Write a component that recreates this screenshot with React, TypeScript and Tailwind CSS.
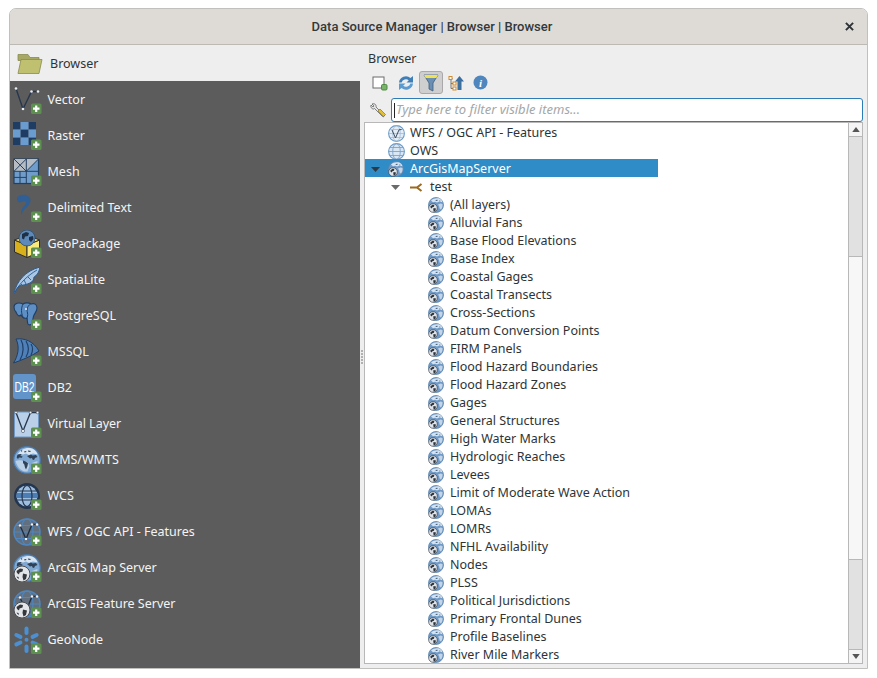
import React from "react";

const Plus = () => (
  <g>
    <rect x="18" y="17.500" width="10.500" height="10.500" rx="1.600" fill="#5c8f50" />
    <path d="M23.200 19.500v6.500M20 22.700h6.500" stroke="#fff" strokeWidth="2.200" />
  </g>
);

const GlobeBase = () => (
  <g>
    <circle cx="14" cy="14" r="13.300" fill="#7fa8d2" stroke="#4a78a8" strokeWidth="1.200" />
    <path d="M4 9c3-5 8-7.500 13-7 4 .7 6.500 3 7.500 6.500L20 7.500 16 9l-3-1.500-3 1-2.500-.5z" fill="#d7e4f1" />
    <path d="M2.500 15c3-1 6-1 8 .5l4 .5 2 4-2 5.500c-5 .5-10-3-12-10.500zM19 17l5.500-2c0 3-1 6-3.500 8.500z" fill="#b9d0e6" />
    <g fill="#2f4257">
      <path d="M4.500 8.500l3.500-.5.500 1-1.500 1 2.500.3-.5 1.500-3-.3-1 1.500-1.300-1.500zM11 5.500l2-.5.500 1-2 .5zM15 4.500l3 .5-1 1-2-.5z" />
      <path d="M14 10l4-1.500 1.500 1 3.500-.5 1.500 2-2.500 1-1 2-1.500-.5-.5-1.500-2 .5z" />
      <path d="M10 14.500l2.500 1 2.500 1.500-.5 3-1.500 3.500-1-2-.7-3-1.300-1.500zM20 19l1.500.5-.5 2-1.200-.5zM8 4l1.500 1-1.500.7z" />
    </g>
  </g>
);

const SmallServer = () => (
  <g>
    <circle cx="9" cy="20" r="8" fill="#e3e6e9" stroke="#4a4e52" strokeWidth="1" />
    <path d="M3.500 17l3.500-2.500 3 .5-.5 2.500-3 1-.5 2-2-1.500zM10 19.500l4 1-1 4.500-2.500 1.500-1-3.500zM3.500 22.500l2 .5.500 2-1.500-1z" fill="#34383c" />
  </g>
);

const GridGlobe = () => (
  <g fill="none">
    <circle cx="14" cy="14" r="13" fill="#6d9ccc" fillOpacity=".3" stroke="#4f86bf" strokeWidth="1.500" />
    <ellipse cx="14" cy="14" rx="6" ry="13" stroke="#4f86bf" strokeWidth="1.100" />
    <path d="M1 14h26M3 7.500h22M3 20.500h22" stroke="#4f86bf" strokeWidth="1.100" />
  </g>
);

const VShape = () => (
  <g>
    <path d="M7 7.500L13 21 19 6.500 24 6.500" fill="none" stroke="#1f2d40" strokeWidth="1.300" />
    <g fill="#f2f2f2">
      <circle cx="7" cy="7.500" r="1.200" />
      <circle cx="13" cy="21" r="1.200" />
      <circle cx="19" cy="6.500" r="1.200" />
      <circle cx="24" cy="6.500" r="1.200" />
    </g>
  </g>
);

const icons: Record<string, React.ReactNode> = {
  vector: (
    <>
      <path d="M3 2.500L10 23 18.500 5.500H25" fill="none" stroke="#26364d" strokeWidth="1.400" />
      <g fill="#e9edf1">
        <circle cx="3" cy="2.500" r="1.300" />
        <circle cx="10" cy="23" r="1.300" />
        <circle cx="18.500" cy="5.500" r="1.300" />
        <circle cx="25" cy="5.500" r="1.300" />
      </g>
    </>
  ),
  raster: (
    <>
      <path d="M0 0h7.500v7.500H0zM15.500 0H23v7.500h-7.500zM7.500 7.500h8v8h-8zM0 15.500h7.500V23H0zM15.500 15.500H23V23h-7.500z" fill="#1f3d63" />
      <path d="M7.500 0h8v7.500h-8zM0 7.500h7.500v8H0zM15.500 7.500H23v8h-7.500zM7.500 15.500h8V23h-8z" fill="#6b9ccf" />
    </>
  ),
  mesh: (
    <>
      <rect x="1" y="1" width="24.500" height="24.500" fill="#6f9ccb" stroke="#24405f" strokeWidth="1.200" />
      <path d="M1 1h12.300v12.300H1z" fill="#b5bcc4" />
      <path d="M13.300 1h12.200L13.300 13.300z" fill="#b5bcc4" />
      <path d="M13.300 1v24.500M1 13.300h24.500M1 1l12.300 12.300M13.300 1L1 13.300M25.500 1L13.300 13.300M1 19.400h12.300M7 13.300v12.200" stroke="#24405f" strokeWidth="1" fill="none" />
    </>
  ),
  delimited: (
    <path d="M8 1c5-1 9 1 9.500 5 .4 4-3.500 7-6 9.500-1.400 1.400-2.700 3.500-3 6-.8-3-.3-6 1.500-8.500C12 11 13.500 9.500 13 8 12.500 6.800 11 7 9 8 6 9 4 8 4 5c0-2 2-3.500 4-4z" fill="#2f5f94" />
  ),
  geopackage: (
    <>
      <path d="M1.500 10v12L14 27.500V15z" fill="#d8b01c" stroke="#2d2d2d" strokeWidth="1" />
      <path d="M26.500 10v12L14 27.500V15z" fill="#f7e97a" stroke="#2d2d2d" strokeWidth="1" />
      <path d="M1.500 10L14 5l12.500 5L14 15z" fill="#f3d86a" stroke="#2d2d2d" strokeWidth="1" />
      <circle cx="14" cy="8" r="8" fill="#5d8ab8" stroke="#2c4f75" strokeWidth=".8" />
      <path d="M9 4l4-2 3 1-1 3-3 .5-1 3-2-1zM16 7l4-1 .5 3-2.500 3-2-2z" fill="#1f3046" />
    </>
  ),
  spatialite: (
    <>
      <path d="M1 27C4 15 12 5 27 1c-1 6-4 9-6 10 0 3-2 5-4 6-4 2-8 2-11 3-2 2-3 4-4 7z" fill="#a9c6e6" stroke="#2c5a8c" strokeWidth="1" />
      <path d="M2 26C7 17 14 10 24 4M11 14l2 4M15 11l3 3M8 18l2 2" stroke="#2c5a8c" strokeWidth=".9" fill="none" />
    </>
  ),
  postgres: (
    <>
      <path d="M1 5c0-4 5-5 9-3 2-1.500 6-1.500 8 0 3-1 6 0 6 4 0 3-2 5-3 7-1 2-1 5-2 8-.5 2-3 2.500-4 1-1-2-.5-4-1-6-3 1-5-1-6-3-2 2-4 0-5-3C2 9 1 7 1 5z" fill="#5e8fc4" stroke="#1f3f66" strokeWidth="1.100" />
      <path d="M10 2c-2 4-2 9 0 13M17.500 2c-3 2-4 5-3 9 .5 2 0 4-1 6" stroke="#1f3f66" strokeWidth="1" fill="none" />
      <circle cx="13" cy="7" r="1" fill="#e9eef4" />
    </>
  ),
  mssql: (
    <>
      <path d="M3 1c9-1 17 2 23 12C19 18 9 22 .5 25 5 18 7 9 3 1z" fill="#4f81b8" stroke="#1f3f66" strokeWidth="1" />
      <path d="M8 2c3 5 3 13-1 20M13 3c3 5 3 11 0 16M18 6c2 3 2 7 0 11" stroke="#1f3f66" strokeWidth="1.200" fill="none" />
    </>
  ),
  db2: (
    <>
      <rect x="0" y="0" width="23" height="25" rx="3" fill="#6394c9" />
      <text x="1.500" y="18" fontSize="14" fill="#fff" fontFamily="'Liberation Sans', sans-serif" textLength="20" lengthAdjust="spacingAndGlyphs">DB2</text>
    </>
  ),
  virtual: (
    <>
      <rect x="1.500" y="2" width="24" height="25" fill="#b9d0e8" stroke="#6f97c2" strokeWidth="1" />
      <path d="M3 2.500L10 21l7.500-18.500L24.500 2.500" fill="none" stroke="#26364d" strokeWidth="1.300" />
      <g fill="#f2f2f2" stroke="#26364d" strokeWidth=".5">
        <circle cx="3" cy="2.500" r="1.300" />
        <circle cx="10" cy="21" r="1.600" />
        <circle cx="17.500" cy="2.500" r="1.300" />
        <circle cx="24.500" cy="2.500" r="1.300" />
      </g>
    </>
  ),
  wms: <GlobeBase />,
  wcs: (
    <>
      <circle cx="14" cy="14" r="13" fill="#24364f" />
      <circle cx="14" cy="14" r="10.500" fill="#9fbfe0" />
      <path d="M3.500 11h21v5h-21z" fill="#4c7db3" />
      <ellipse cx="14" cy="14" rx="5" ry="10.500" fill="none" stroke="#24364f" strokeWidth="1.200" />
      <path d="M3.500 9h21M3.500 18h21" stroke="#24364f" strokeWidth="1" />
    </>
  ),
  wfs: (
    <>
      <GridGlobe />
      <VShape />
    </>
  ),
  arcmap: (
    <>
      <GlobeBase />
      <SmallServer />
    </>
  ),
  arcfeat: (
    <>
      <GridGlobe />
      <VShape />
      <SmallServer />
    </>
  ),
  geonode: (
    <g fill="#4d8fd0">
      <rect x="11.500" y="0.500" width="4" height="8.500" rx="2" />
      <rect x="11.500" y="18.500" width="4" height="8.500" rx="2" />
      <rect x="11.500" y="0.500" width="4" height="8.500" rx="2" transform="rotate(65 13.500 13.700)" />
      <rect x="11.500" y="0.500" width="4" height="8.500" rx="2" transform="rotate(-65 13.500 13.700)" />
      <rect x="11.500" y="0.500" width="4" height="8.500" rx="2" transform="rotate(115 13.500 13.700)" />
      <rect x="11.500" y="0.500" width="4" height="8.500" rx="2" transform="rotate(-115 13.500 13.700)" />
      <circle cx="13.500" cy="13.700" r="2" />
    </g>
  ),
};

const providers: [string, string][] = [
  ["vector", "Vector"],
  ["raster", "Raster"],
  ["mesh", "Mesh"],
  ["delimited", "Delimited Text"],
  ["geopackage", "GeoPackage"],
  ["spatialite", "SpatiaLite"],
  ["postgres", "PostgreSQL"],
  ["mssql", "MSSQL"],
  ["db2", "DB2"],
  ["virtual", "Virtual Layer"],
  ["wms", "WMS/WMTS"],
  ["wcs", "WCS"],
  ["wfs", "WFS / OGC API - Features"],
  ["arcmap", "ArcGIS Map Server"],
  ["arcfeat", "ArcGIS Feature Server"],
  ["geonode", "GeoNode"],
];

const layers = [
  "(All layers)",
  "Alluvial Fans",
  "Base Flood Elevations",
  "Base Index",
  "Coastal Gages",
  "Coastal Transects",
  "Cross-Sections",
  "Datum Conversion Points",
  "FIRM Panels",
  "Flood Hazard Boundaries",
  "Flood Hazard Zones",
  "Gages",
  "General Structures",
  "High Water Marks",
  "Hydrologic Reaches",
  "Levees",
  "Limit of Moderate Wave Action",
  "LOMAs",
  "LOMRs",
  "NFHL Availability",
  "Nodes",
  "PLSS",
  "Political Jurisdictions",
  "Primary Frontal Dunes",
  "Profile Baselines",
  "River Mile Markers",
];

const ArcGlobe = ({ className }: { className: string }) => (
  <svg viewBox="0 0 16 16" className={className}>
    <circle cx="8" cy="8" r="7.500" fill="#6f99c6" stroke="#5a85b0" strokeWidth=".8" />
    <path d="M3 3.500C5 1.500 8 .8 10.500 1.300c2 .6 3.500 2 4 4l-3-.8-2.500 1-2-.8-2 .5z" fill="#d5e2ef" />
    <path d="M10 7.500l2.500-1 2 .5c.3 2-.2 4-1.500 5.500l-1.500-1-.3-2z" fill="#c3d5e7" />
    <path d="M7.500 3l2-.3.3.8-1.800.4zM11 3.500l1.500.3-.5.8z" fill="#3d5570" />
    <circle cx="5" cy="11" r="4.300" fill="#dfe5ea" stroke="#3c444d" strokeWidth=".7" />
    <path d="M2.300 9.500l2.200-1.700 1.800.3-.3 1.600-1.700.5-.3 1.200-1.400-.7zM5.500 11l2.500.5-.7 2.500-1.500.8-.5-2z" fill="#2f353c" />
  </svg>
);

const WfsGlobe = () => (
  <svg viewBox="0 0 17 17" className="w-[17px] h-[17px]">
    <circle cx="8.500" cy="8.500" r="7.900" fill="#e4edf6" stroke="#6d9ac6" strokeWidth="1.100" />
    <ellipse cx="8.500" cy="8.500" rx="3.800" ry="7.900" fill="none" stroke="#9dbcdb" strokeWidth=".8" />
    <path d="M.7 8.500h15.600M2 4.500h13M2 12.500h13" stroke="#9dbcdb" strokeWidth=".8" />
    <path d="M4 5l3.500 8L11 4.800l2.500-.3" fill="none" stroke="#3b4c63" strokeWidth="1" />
  </svg>
);

const OwsGlobe = () => (
  <svg viewBox="0 0 17 17" className="w-[17px] h-[17px]">
    <circle cx="8.500" cy="8.500" r="7.900" fill="#d9e6f3" stroke="#6d9ac6" strokeWidth="1.100" />
    <ellipse cx="8.500" cy="8.500" rx="3.800" ry="7.900" fill="none" stroke="#7ba4cc" strokeWidth=".9" />
    <path d="M.7 8.500h15.600M2 4.500h13M2 12.500h13" stroke="#7ba4cc" strokeWidth=".9" />
  </svg>
);

const Arrow = ({ color }: { color: string }) => (
  <svg viewBox="0 0 9 5" className="w-[9px] h-[5px]">
    <path d="M0 0h9L4.500 5z" fill={color} />
  </svg>
);

const ScrollArrow = ({ down }: { down?: boolean }) => (
  <svg viewBox="0 0 9 6" className="w-[8px] h-[5px]">
    <path d={down ? "M0 0h9L4.500 6z" : "M0 6h9L4.500 0z"} fill="#555" />
  </svg>
);

export default function App() {
  return (
    <div className="w-[877px] h-[678px] overflow-hidden bg-white pt-2 pl-[9px] text-[12.5px] text-[#2e3436] font-['Noto_Sans',sans-serif]">
      <div className="w-[859px] h-[661px] flex flex-col rounded-t-[7px] border border-[#c2c0bc] bg-[#eeeeee] overflow-hidden">
        <div className="relative h-9 shrink-0 flex items-center justify-center pr-[13px] bg-[#dedbd7] border-b border-[#bdb9b3] font-medium text-[13px] font-['Roboto',sans-serif] text-[#33383a]">
          Data Source Manager | Browser | Browser
          <svg viewBox="0 0 10 10" className="absolute right-[13px] top-[13px] w-[9px] h-[9px]">
            <path d="M1 1l8 8M9 1l-8 8" stroke="#2e3436" strokeWidth="2.200" />
          </svg>
        </div>
        <div className="flex-1 flex min-h-0">
          <div className="w-[350px] shrink-0 flex flex-col">
            <div className="h-9 shrink-0 flex items-center pl-[7px] pt-[2px] gap-[7px] bg-[#eeeeee] text-[#2e3436]">
              <svg viewBox="0 0 26 22" className="w-[26px] h-[22px] mb-[2px]">
                <path d="M1 2.500h10l2 3h9v3H1z" fill="#a6a864" stroke="#8a8c50" strokeWidth=".8" />
                <path d="M4 7.500h21l-3 14H1z" fill="#bfc070" stroke="#8a8c50" strokeWidth=".8" />
              </svg>
              Browser
            </div>
            <div className="flex-1 flex flex-col bg-[#5c5c5c] text-[#f4f4f4]">
              {providers.map(([k, label]) => (
                <div key={k} className="h-9 shrink-0 flex items-center pl-[3px] pt-[2px] gap-[6px]">
                  <svg viewBox="0 0 28.500 28" className="w-[28.500px] h-[28px] shrink-0">
                    {icons[k]}
                    <Plus />
                  </svg>
                  {label}
                </div>
              ))}
            </div>
          </div>
          <div className="relative flex-1 flex flex-col min-w-0 pl-1 pr-[3px]">
            <div className="absolute left-[1px] top-[305px] flex flex-col gap-px">
              {[0, 1, 2, 3, 4].map((i) => (
                <div key={i} className="w-[2px] h-[2px] bg-[#b0b0b0]" />
              ))}
            </div>
            <div className="h-[26px] shrink-0 flex items-center pl-1 pt-[2px]">Browser</div>
            <div className="h-[23px] shrink-0 flex items-center pl-2">
              <svg viewBox="0 0 16 16" className="w-4 h-4 mr-[10px]">
                <rect x="1" y="2" width="11" height="11" fill="#fff" stroke="#6b6b6b" strokeWidth="1" />
                <rect x="9.500" y="9.500" width="5.500" height="5.500" rx="1.200" fill="#7ab36a" stroke="#4e8a44" />
              </svg>
              <svg viewBox="0 0 16 16" className="w-[16px] h-[16px] mr-[5px]">
                <path d="M1 7.500A7 7 0 0 1 12.500 3L15 1v6.500H8.500l2.300-2.200A4.500 4.500 0 0 0 3.600 7.500z" fill="#3f7fb8" />
                <path d="M15 8.500A7 7 0 0 1 3.500 13L1 15V8.500h6.500l-2.300 2.200a4.500 4.500 0 0 0 7.200-2.200z" fill="#5b9bd0" />
              </svg>
              <div className="w-6 h-[23px] flex items-center justify-center rounded-[3px] border border-[#a9a9a9] bg-[#cfcfcf] mr-[5px]">
                <svg viewBox="0 0 16 18" className="w-4 h-[18px]">
                  <path d="M1 1h14L10 9v8l-4-2V9z" fill="#6a8fb3" stroke="#3f5d7a" strokeWidth=".8" />
                  <path d="M1 1h14l-1.600 3H2.600z" fill="#f0e34f" />
                </svg>
              </div>
              <svg viewBox="0 0 16 16" className="w-4 h-4 mr-[9px]">
                <path d="M1.500 3.500h3M3 3.500v10M3 8.500h3M3 13.500h3" stroke="#777" fill="none" />
                <rect x="1" y="1.500" width="3" height="3" fill="#fff" stroke="#d08a2a" />
                <rect x="5" y="7" width="3" height="3" fill="#fff" stroke="#d08a2a" />
                <rect x="5" y="12" width="3" height="3" fill="#fff" stroke="#d08a2a" />
                <path d="M11.500 1L16 6.500h-2.500V15h-4V6.500H7z" fill="#3d6f9f" />
              </svg>
              <svg viewBox="0 0 15 15" className="w-[15px] h-[15px]">
                <circle cx="7.500" cy="7.500" r="7" fill="#4f86bd" />
                <text x="7.500" y="11.500" textAnchor="middle" fontSize="11" fontWeight="700" fontStyle="italic" fill="#fff" fontFamily="'Liberation Serif', serif">i</text>
              </svg>
            </div>
            <div className="h-7 shrink-0 flex items-end">
              <svg viewBox="0 0 20 18" className="w-5 h-[18px] ml-1 mb-[3px] shrink-0">
                <path d="M4 3l2 2-1 1-2-2c-.8 2 .6 4 2.500 4l1-.5 8 8c1 .8 2.500-.5 1.500-1.500l-8-8c.5-2-1-4-4-3z" fill="#e4e4e4" stroke="#555" strokeWidth=".7" />
                <path d="M10 10l5.500 5.500 2-2L12 8z" fill="#e0bf3a" stroke="#7a6518" strokeWidth=".6" />
              </svg>
              <div className="ml-[3px] mr-px flex-1 h-6 bg-white rounded-[3px] border border-[#2c7cb5] flex items-center pl-[2px] italic text-[13px] text-[#a3a7a8] overflow-hidden whitespace-nowrap">
                <div className="w-px h-[15px] bg-[#222] mr-[1px]" />
                Type here to filter visible items...
              </div>
            </div>
            <div className="h-[542px] shrink-0 mr-px flex border border-[#b8b8b8] bg-white overflow-hidden">
              <div className="flex-1 min-w-0 flex flex-col overflow-hidden">
                <div className="h-[18px] shrink-0 flex items-center pl-[23px] pt-[2px] gap-[5px]">
                  <WfsGlobe />
                  WFS / OGC API - Features
                </div>
                <div className="h-[18px] shrink-0 flex items-center pl-[23px] pt-[2px] gap-[5px]">
                  <OwsGlobe />
                  OWS
                </div>
                <div className="h-[18px] shrink-0 w-[293px] flex items-center pl-[6px] pt-[2px] bg-[#308cc6] text-white">
                  <Arrow color="#2b3a44" />
                  <span className="w-2" />
                  <ArcGlobe className="w-4 h-4 mr-[6px]" />
                  ArcGisMapServer
                </div>
                <div className="h-[18px] shrink-0 flex items-center pl-[26px] pt-[2px]">
                  <Arrow color="#6a6a6a" />
                  <svg viewBox="0 0 13 9" className="w-[13px] h-[9px] ml-[10px] mr-[7px]">
                    <path d="M0 4.500h7M11.500 1L7 4.500l4.500 3.500" fill="none" stroke="#9c6a1e" strokeWidth="2" />
                  </svg>
                  test
                </div>
                {layers.map((l) => (
                  <div key={l} className="h-[18px] shrink-0 flex items-center pl-[63px] pt-[2px] gap-[6px] whitespace-nowrap">
                    <ArcGlobe className="w-4 h-4 shrink-0" />
                    {l}
                  </div>
                ))}
              </div>
              <div className="w-[14px] shrink-0 flex flex-col border-l border-[#b8b8b8] bg-[#e1e1e1]">
                <div className="h-[14px] shrink-0 flex items-center justify-center bg-[#f4f4f4] border-b border-[#b8b8b8]">
                  <ScrollArrow />
                </div>
                <div className="h-[119px] shrink-0" />
                <div className="h-[304px] shrink-0 bg-[#f7f7f7] border-y border-[#b8b8b8]" />
                <div className="flex-1" />
                <div className="h-[14px] shrink-0 flex items-center justify-center bg-[#f4f4f4] border-t border-[#b8b8b8]">
                  <ScrollArrow down />
                </div>
              </div>
            </div>
          </div>
        </div>
      </div>
    </div>
  );
}
